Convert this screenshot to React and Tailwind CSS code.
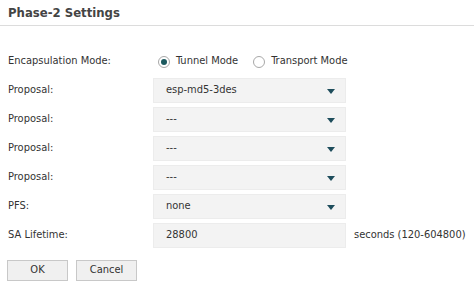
import { useState } from 'react';

const font = { fontFamily: "'DejaVu Sans Condensed', 'DejaVu Sans', sans-serif" };

const Arrow = () => (
  <svg width="8" height="5" viewBox="0 0 8 5" className="absolute right-[10px] top-[10px]">
    <path d="M0 0 L8 0 L4 5 Z" fill="#1e4d5c" />
  </svg>
);

const Row = ({ label, children }) => (
  <div className="flex items-center h-[25px]">
    <div className="w-[145px] shrink-0">{label}</div>
    {children}
  </div>
);

const SelectBox = ({ value }) => (
  <div className="relative w-[193px] h-[25px] bg-[#f3f3f3] border border-[#ececec] flex items-center pl-[12px]">
    {value}
    <Arrow />
  </div>
);

const Radio = ({ checked, label }) => (
  <label className="flex items-center gap-[6px]">
    <span className="w-[12px] h-[12px] rounded-full border border-[#a8a8a8] bg-white flex items-center justify-center">
      {checked && <span className="w-[6px] h-[6px] rounded-full bg-[#1c5a5f]" />}
    </span>
    {label}
  </label>
);

export default function App() {
  const [mode] = useState('tunnel');
  const proposals = ['esp-md5-3des', '---', '---', '---'];

  return (
    <div className="w-[474px] h-[292px] bg-white text-[#333] text-[11px] overflow-hidden" style={font}>
      {/* Header */}
      <div className="h-[26px] border-b border-[#dcdcdc] px-[8px] pt-[4px]">
        <h2 className="text-[13px] font-bold text-[#444] leading-[18px]">Phase-2 Settings</h2>
      </div>

      <div className="px-[8px] pt-[23px] flex flex-col gap-[4px]">
        <Row label="Encapsulation Mode:">
          <div className="flex items-center gap-[15px] pl-[5px]">
            <Radio checked={mode === 'tunnel'} label="Tunnel Mode" />
            <Radio checked={mode === 'transport'} label="Transport Mode" />
          </div>
        </Row>
        {proposals.map((p, i) => (
          <Row key={i} label="Proposal:">
            <SelectBox value={p} />
          </Row>
        ))}
        <Row label="PFS:">
          <SelectBox value="none" />
        </Row>
        <Row label="SA Lifetime:">
          <div className="w-[193px] h-[25px] bg-[#f3f3f3] border border-[#ececec] flex items-center pl-[12px]">28800</div>
          <span className="ml-[8px]">seconds (120-604800)</span>
        </Row>
      </div>

      {/* Buttons */}
      <div className="flex gap-[8px] px-[7px] mt-[12px]">
        <button className="w-[61px] h-[21px] bg-[#f0f0f0] border border-[#c8c8c8] text-[#333]">OK</button>
        <button className="w-[61px] h-[21px] bg-[#f0f0f0] border border-[#c8c8c8] text-[#333]">Cancel</button>
      </div>
    </div>
  );
}
